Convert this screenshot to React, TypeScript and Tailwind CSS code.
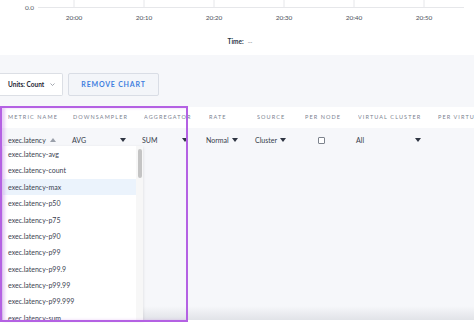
import React from 'react';

const TICKS = [
  { x: 74, label: '20:00' },
  { x: 144, label: '20:10' },
  { x: 214, label: '20:20' },
  { x: 284, label: '20:30' },
  { x: 354, label: '20:40' },
  { x: 424, label: '20:50' },
];

const COLUMNS = ['Metric Name', 'Downsampler', 'Aggregator', 'Rate', 'Source', 'Per Node', 'Virtual Cluster', 'Per Virtual Cluster'];

const METRICS = [
  'exec.latency-avg',
  'exec.latency-count',
  'exec.latency-max',
  'exec.latency-p50',
  'exec.latency-p75',
  'exec.latency-p90',
  'exec.latency-p99',
  'exec.latency-p99.9',
  'exec.latency-p99.99',
  'exec.latency-p99.999',
  'exec.latency-sum',
];

const GRID = 'grid grid-cols-[65px_71px_65px_48px_48px_53px_80px_1fr] pl-[8px]';

function Caret({ up = false }: { up?: boolean }) {
  return (
    <svg width="6" height="4" viewBox="0 0 6 4" className={up ? 'rotate-180' : ''}>
      <path d="M0 0 L6 0 L3 4 Z" fill={up ? '#9aa0aa' : '#2f3542'} />
    </svg>
  );
}

function AxisChart() {
  return (
    <div className="h-[55px] bg-white relative">
      <svg width="474" height="30" className="block">
        {TICKS.map((t) => (
          <line key={t.x} x1={t.x} y1={0} x2={t.x} y2={7} stroke="#e6e7ea" strokeWidth="1" />
        ))}
        <line x1={38} y1={7.5} x2={464} y2={7.5} stroke="#e6e7ea" strokeWidth="1" />
        <text x={34} y={9.5} textAnchor="end" fontSize="6.5" fill="#555b66" fontFamily="Lato, sans-serif">0.0</text>
        {TICKS.map((t) => (
          <text key={t.label} x={t.x} y={20} textAnchor="middle" fontSize="6.5" fill="#4a505b" fontFamily="Lato, sans-serif">
            {t.label}
          </text>
        ))}
      </svg>
      <div className="flex justify-center items-center gap-[4px] mt-[7px] text-[6.5px] pl-[6px]">
        <span className="font-bold text-[#2a3547]">Time:</span>
        <span className="text-[#6b7280]">--</span>
      </div>
    </div>
  );
}

export default function App() {
  return (
    <div className="w-[474px] h-[323px] overflow-hidden relative bg-[#f6f7fa] flex flex-col" style={{ fontFamily: 'Lato, "Open Sans", sans-serif' }}>
      <AxisChart />

      {/* controls */}
      <div className="flex items-center gap-[5px] mt-[18px] h-[23px]">
        <button className="h-full w-[63px] bg-white border border-l-0 border-[#dcdfe5] rounded-r-[2px] flex items-center justify-between pl-[8px] pr-[7px]">
          <span className="text-[6.5px] font-bold text-[#1f2633]">Units: Count</span>
          <svg width="5" height="3" viewBox="0 0 5 3">
            <path d="M0.5 0.5 L2.5 2.5 L4.5 0.5" fill="none" stroke="#7b818c" strokeWidth="0.7" />
          </svg>
        </button>
        <button className="h-full w-[91px] bg-[#f3f5f9] border border-[#d9dde5] rounded-[2px] text-[7px] font-bold tracking-[0.8px] text-[#3f7fe0]">
          REMOVE CHART
        </button>
      </div>

      {/* metrics table */}
      <div className={`${GRID} mt-[11px] bg-white h-[21px] items-center text-[5.5px] uppercase tracking-[1.1px] text-[#7b8290]`}>
        {COLUMNS.map((c) => (
          <span key={c} className="whitespace-nowrap overflow-hidden">{c}</span>
        ))}
      </div>

      <div className={`${GRID} h-[24px] items-center text-[7px] text-[#353c4a]`}>
        <div className="flex items-center gap-[4px]">
          <span>exec.latency</span>
          <Caret up />
        </div>
        <div className="flex items-center justify-between pr-[18px] -ml-[1px]">
          <span>AVG</span>
          <Caret />
        </div>
        <div className="flex items-center justify-between pr-[21px] -ml-[2px]">
          <span>SUM</span>
          <Caret />
        </div>
        <div className="flex items-center gap-[3px] -ml-[3px]">
          <span>Normal</span>
          <Caret />
        </div>
        <div className="flex items-center gap-[3px] -ml-[2px]">
          <span>Cluster</span>
          <Caret />
        </div>
        <div className="flex items-center pl-[13px]">
          <span className="w-[7px] h-[7px] border border-[#7d838d] rounded-[1px] bg-white" />
        </div>
        <div className="flex items-center justify-between pr-[17px] -ml-[2px]">
          <span>All</span>
          <Caret />
        </div>
        <div />
      </div>

      <div className="flex-1" />
      <div className="h-[14px] bg-gradient-to-b from-[#f6f7fa] to-[#e1e3e8]" />
      <div className="h-[3px] bg-white" />

      {/* open dropdown */}
      <div className="absolute left-[3px] top-[146px] w-[140px] bottom-[3px] bg-white flex overflow-hidden shadow-[0_1px_3px_rgba(0,0,0,0.12)] z-10">
        <div className="flex-1">
          {METRICS.map((m) => (
            <div
              key={m}
              className={`h-[16.4px] flex items-center pl-[5px] text-[7px] text-[#3a4150] ${m === 'exec.latency-max' ? 'bg-[#ebf3fc]' : ''}`}
            >
              {m}
            </div>
          ))}
        </div>
        <div className="w-[7px] bg-[#f7f7f7] pt-[3px] flex justify-center">
          <div className="w-[4px] h-[29px] rounded-[2px] bg-[#c4c4c4]" />
        </div>
      </div>

      {/* highlight frame */}
      <div className="absolute left-0 top-[106px] w-[188px] h-[216px] border-2 border-[#b461e3] shadow-[inset_3px_0_3px_rgba(190,120,230,0.35)] z-20 pointer-events-none" />
    </div>
  );
}
